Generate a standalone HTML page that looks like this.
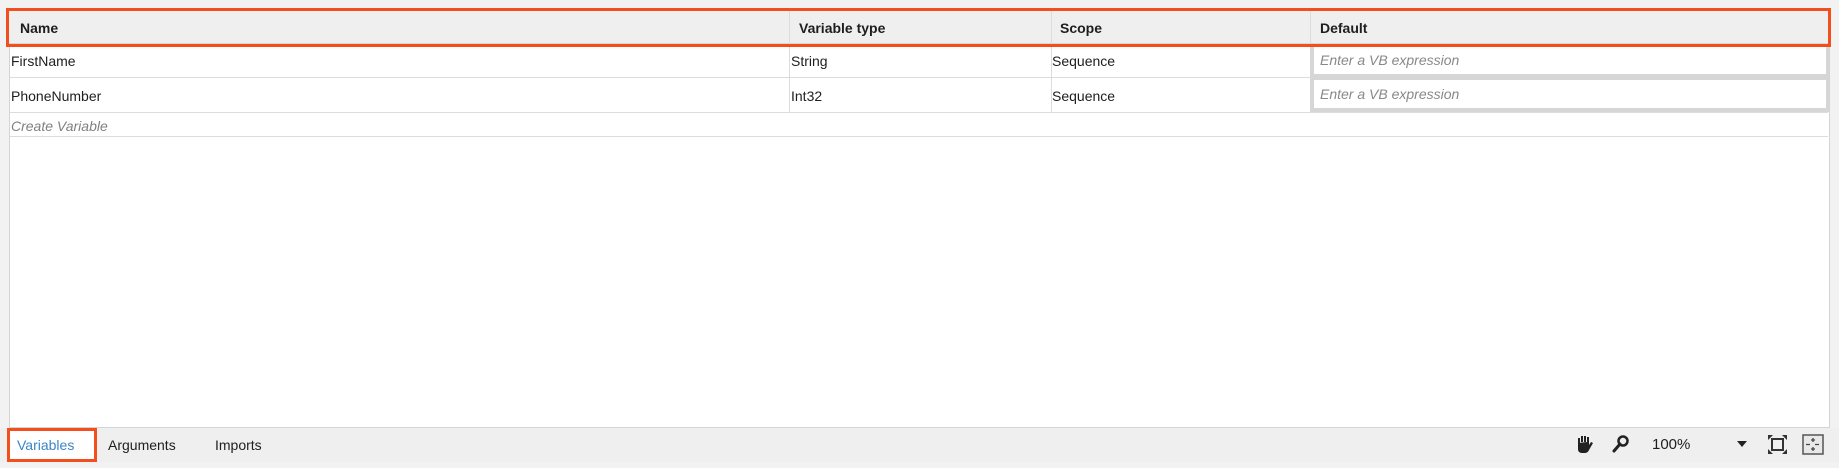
<!DOCTYPE html>
<html><head><meta charset="utf-8"><style>
*{margin:0;padding:0;box-sizing:border-box}
body{width:1839px;height:468px;background:#f2f2f2;position:relative;overflow:hidden;font-family:"Liberation Sans",sans-serif;font-size:14px;color:#1e1e1e}
.a{position:absolute}
.t{position:absolute;white-space:nowrap;line-height:18px}
</style></head><body>
<div class="a" style="left:9px;top:8px;width:1821px;height:420px;background:#fff;border:1px solid #d4d4d4"></div>
<div class="a" style="left:9px;top:11px;width:1819px;height:33px;background:#efefef;border-bottom:1px solid #d6d6d6"></div>
<div class="a" style="left:789px;top:11px;width:1px;height:101px;background:#dcdcdc"></div>
<div class="a" style="left:1051px;top:11px;width:1px;height:101px;background:#dcdcdc"></div>
<div class="a" style="left:1310px;top:11px;width:1px;height:33px;background:#dcdcdc"></div>
<div class="t" style="left:20px;top:19px;font-weight:bold">Name</div>
<div class="t" style="left:799px;top:19px;font-weight:bold">Variable type</div>
<div class="t" style="left:1060px;top:19px;font-weight:bold">Scope</div>
<div class="t" style="left:1320px;top:19px;font-weight:bold">Default</div>
<div class="a" style="left:6px;top:8px;width:1825px;height:39px;border:3px solid #f24e1e"></div>
<div class="a" style="left:10px;top:77px;width:1818px;height:1px;background:#dcdcdc"></div>
<div class="a" style="left:10px;top:112px;width:1818px;height:1px;background:#dcdcdc"></div>
<div class="a" style="left:10px;top:136px;width:1818px;height:1px;background:#dcdcdc"></div>
<div class="t" style="left:11px;top:52px">FirstName</div>
<div class="t" style="left:11px;top:87px">PhoneNumber</div>
<div class="t" style="left:11px;top:117px;font-style:italic;color:#808080">Create Variable</div>
<div class="t" style="left:791px;top:52px">String</div>
<div class="t" style="left:791px;top:87px">Int32</div>
<div class="t" style="left:1052px;top:52px">Sequence</div>
<div class="t" style="left:1052px;top:87px">Sequence</div>
<div class="a" style="left:1310px;top:47px;width:519px;height:65px;background:#d6d6d6"></div>
<div class="a" style="left:1314px;top:47px;width:512px;height:27px;background:#fff"></div>
<div class="a" style="left:1314px;top:80px;width:512px;height:28px;background:#fff"></div>
<div class="t" style="left:1320px;top:51px;font-style:italic;color:#888">Enter a VB expression</div>
<div class="t" style="left:1320px;top:85px;font-style:italic;color:#888">Enter a VB expression</div>
<div class="a" style="left:0;top:428px;width:1839px;height:34px;background:#efefef"></div>
<div class="a" style="left:7px;top:428px;width:90px;height:34px;background:#fff;border:3px solid #f24e1e"></div>
<div class="t" style="left:17px;top:436px;color:#3a86c8">Variables</div>
<div class="t" style="left:108px;top:436px">Arguments</div>
<div class="t" style="left:215px;top:436px">Imports</div>
<svg class="a" style="left:1574px;top:434px" width="20" height="20" viewBox="0 0 20 20"><path d="M4 9V4h2v5M7 8V2h2v6M10 8V2h2v6M13 8V3h2v8l2-3 2 1-4 7c-1 2-2 3-5 3H8c-3 0-4-2-4-4V9z" fill="#222"/></svg>
<svg class="a" style="left:1611px;top:434px" width="20" height="20" viewBox="0 0 20 20"><circle cx="12" cy="7" r="4.5" fill="none" stroke="#222" stroke-width="2.5"/><path d="M9 10L3 17" stroke="#222" stroke-width="3" stroke-linecap="round"/></svg>
<div class="t" style="left:1652px;top:436px;font-size:15px">100%</div>
<svg class="a" style="left:1737px;top:441px" width="10" height="6"><path d="M0 0h10L5 6z" fill="#222"/></svg>
<svg class="a" style="left:1767px;top:434px" width="21" height="21" viewBox="0 0 21 21"><rect x="5" y="5" width="11" height="11" fill="none" stroke="#333" stroke-width="2"/><path d="M1 1l5 0-5 5zM20 1l-5 0 5 5zM1 20l5 0-5-5zM20 20l-5 0 5-5z" fill="#333"/></svg>
<svg class="a" style="left:1802px;top:434px" width="22" height="21" viewBox="0 0 22 21"><rect x="1" y="1" width="20" height="19" fill="#e8e8e8" stroke="#555" stroke-width="1.5"/><path d="M11 4v4M9 6h4M11 17v-4M9 15h4M4 10.5h4M17 10.5h-4" stroke="#444" stroke-width="1.3"/></svg>
</body></html>
